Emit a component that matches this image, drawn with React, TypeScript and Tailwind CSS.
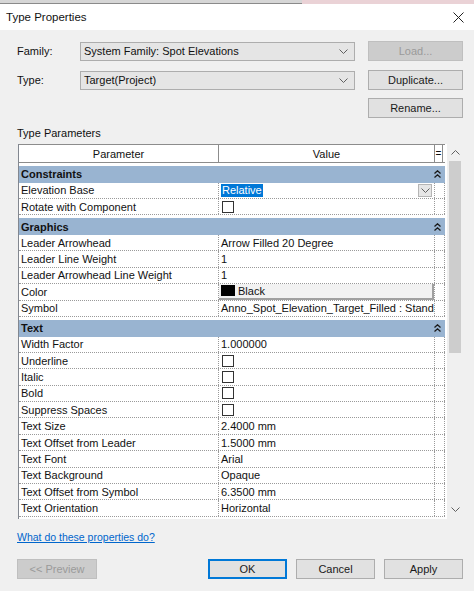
import React from 'react'

type Row =
  | { kind: 'group'; label: string }
  | { kind: 'row'; label: string; value: string | { type: 'check' | 'relative' | 'color' } }

const rows: Row[] = [
  { kind: 'group', label: 'Constraints' },
  { kind: 'row', label: 'Elevation Base', value: { type: 'relative' } },
  { kind: 'row', label: 'Rotate with Component', value: { type: 'check' } },
  { kind: 'group', label: 'Graphics' },
  { kind: 'row', label: 'Leader Arrowhead', value: 'Arrow Filled 20 Degree' },
  { kind: 'row', label: 'Leader Line Weight', value: '1' },
  { kind: 'row', label: 'Leader Arrowhead Line Weight', value: '1' },
  { kind: 'row', label: 'Color', value: { type: 'color' } },
  { kind: 'row', label: 'Symbol', value: 'Anno_Spot_Elevation_Target_Filled : Standard' },
  { kind: 'group', label: 'Text' },
  { kind: 'row', label: 'Width Factor', value: '1.000000' },
  { kind: 'row', label: 'Underline', value: { type: 'check' } },
  { kind: 'row', label: 'Italic', value: { type: 'check' } },
  { kind: 'row', label: 'Bold', value: { type: 'check' } },
  { kind: 'row', label: 'Suppress Spaces', value: { type: 'check' } },
  { kind: 'row', label: 'Text Size', value: '2.4000 mm' },
  { kind: 'row', label: 'Text Offset from Leader', value: '1.5000 mm' },
  { kind: 'row', label: 'Text Font', value: 'Arial' },
  { kind: 'row', label: 'Text Background', value: 'Opaque' },
  { kind: 'row', label: 'Text Offset from Symbol', value: '6.3500 mm' },
  { kind: 'row', label: 'Text Orientation', value: 'Horizontal' },
]

function Chevron({ className = '' }: { className?: string }) {
  return (
    <svg width="9" height="5" viewBox="0 0 9 5" className={className}>
      <path d="M0.5 0.5 L4.5 4.5 L8.5 0.5" fill="none" stroke="#606060" strokeWidth="1" />
    </svg>
  )
}

function DoubleUp() {
  return (
    <svg width="7" height="8" viewBox="0 0 7 8">
      <path d="M0.5 3.5 L3.5 0.8 L6.5 3.5 M0.5 7.5 L3.5 4.8 L6.5 7.5" fill="none" stroke="#1a1a1a" strokeWidth="1.3" />
    </svg>
  )
}

function Checkbox() {
  return <div className="w-[12px] h-[12px] border border-[#333333] bg-white" />
}

function Combo({ text }: { text: string }) {
  return (
    <div className="w-[275px] h-[19px] bg-[#e5e5e5] border border-[#adadad] flex items-center justify-between pl-[3px] pr-[6px]">
      <span>{text}</span>
      <Chevron />
    </div>
  )
}

function Btn({ label, disabled, primary, w = 'w-[95px]', h = 'h-[20px]' }: { label: string; disabled?: boolean; primary?: boolean; w?: string; h?: string }) {
  const cls = disabled
    ? 'bg-[#cccccc] border-[#bfbfbf] text-[#9a9a9a]'
    : primary
      ? 'bg-[#e1e1e1] border-[#0078d7] border-2 text-[#1a1a1a]'
      : 'bg-[#e1e1e1] border-[#adadad] text-[#1a1a1a]'
  return <div className={`${w} ${h} border flex items-center justify-center ${cls}`}>{label}</div>
}

function Value({ v }: { v: Extract<Row, { kind: 'row' }>['value'] }) {
  if (typeof v === 'string') {
    return <span className="pl-[2px] whitespace-nowrap leading-[14px]">{v}</span>
  }
  if (v.type === 'check') {
    return <div className="pl-[3px]"><Checkbox /></div>
  }
  if (v.type === 'relative') {
    return (
      <div className="flex items-center justify-between w-full pr-[2px]">
        <span className="ml-[2px] bg-[#0078d7] text-white px-[1px] h-[13px] flex items-center">Relative</span>
        <div className="w-[14px] h-[13px] bg-[#e6e6e6] border border-[#b5b5b5] flex items-center justify-center">
          <Chevron />
        </div>
      </div>
    )
  }
  return (
    <div className="w-full h-full bg-[#f2f2f2] border-r-2 border-b-2 border-[#a0a0a0] flex items-center gap-[3px] pl-[2px]">
      <div className="w-[14px] h-[11px] bg-black" />
      <span>Black</span>
    </div>
  )
}

export default function App() {
  return (
    <div className="w-[474px] h-[591px] overflow-hidden flex flex-col bg-[#f0f0f0] text-[11px] leading-[14px] text-[#111111] font-['Liberation_Sans','Arial',sans-serif]">
      <div className="h-[4px] flex">
        <div className="w-[302px] bg-[#d6d6d6] border-b border-[#8a8a8a]" />
        <div className="flex-1 bg-[#ead2d6]" />
      </div>
      <div className="h-[26px] bg-white flex items-center justify-between pl-[6px] pr-[10px]">
        <span className="text-[11.5px]">Type Properties</span>
        <svg width="11" height="11" viewBox="0 0 11 11">
          <path d="M0.5 0.5 L10.5 10.5 M10.5 0.5 L0.5 10.5" stroke="#222" strokeWidth="1" />
        </svg>
      </div>

      <div className="flex-1 flex flex-col pl-[17px] pr-[11px] pt-[11px]">
        <div className="flex items-center">
          <span className="w-[63px]">Family:</span>
          <Combo text="System Family: Spot Elevations" />
          <div className="ml-auto"><Btn label="Load..." disabled /></div>
        </div>
        <div className="flex items-center mt-[9px]">
          <span className="w-[63px]">Type:</span>
          <Combo text="Target(Project)" />
          <div className="ml-auto"><Btn label="Duplicate..." /></div>
        </div>
        <div className="flex justify-end mt-[8px]">
          <Btn label="Rename..." />
        </div>

        <div className="mt-[9px] h-[12px] flex items-center">Type Parameters</div>

        <div className="mt-[5px] ml-[1px] flex bg-white border-l border-[#828790] h-[375px]">
          <div className="w-[427px] flex flex-col">
            <div className="h-[19px] flex border-t border-b border-[#8c8c8c] bg-white">
              <div className="w-[200px] flex items-center justify-center border-r border-[#8c8c8c]">Parameter</div>
              <div className="w-[216px] flex items-center justify-center border-r border-[#8c8c8c]">Value</div>
              <div className="w-[8px] flex items-center justify-center border-r border-[#8c8c8c] text-[10px]">=</div>
            </div>
            {rows.map((r, i) =>
              r.kind === 'group' ? (
                <div key={i} className="h-[19.6px] pt-[3px] bg-white">
                  <div className="h-full bg-[#99b4d1] flex items-center justify-between pl-[2px] pr-[4px] font-bold">
                    <span>{r.label}</span>
                    <DoubleUp />
                  </div>
                </div>
              ) : (
                <div key={i} className="h-[16.4px] flex border-b border-dotted border-[#9a9a9a]">
                  <div className="w-[200px] flex items-center pl-[2px] border-r border-dotted border-[#9a9a9a] whitespace-nowrap">{r.label}</div>
                  <div className="w-[216px] flex items-center border-r border-dotted border-[#9a9a9a] overflow-hidden">
                    <Value v={r.value} />
                  </div>
                  <div className="w-[10px] border-r border-dotted border-[#9a9a9a]" />
                </div>
              )
            )}
          </div>
          <div className="w-[2px]" />
          <div className="w-[16px] bg-[#f0f0f0] flex flex-col items-center">
            <div className="h-[17px] flex items-center justify-center">
              <Chevron className="rotate-180" />
            </div>
            <div className="w-[12px] h-[192px] bg-[#cdcdcd]" />
            <div className="flex-1" />
            <div className="h-[17px] flex items-center justify-center mb-[1px]">
              <Chevron />
            </div>
          </div>
        </div>

        <div className="mt-[11px] text-[10.5px] text-[#0066cc] underline">What do these properties do?</div>

        <div className="mt-[15px] flex items-center">
          <Btn label="<< Preview" disabled w="w-[80px]" />
          <div className="ml-auto flex gap-[9px]">
            <Btn label="OK" primary w="w-[79px]" />
            <Btn label="Cancel" w="w-[79px]" />
            <Btn label="Apply" w="w-[79px]" />
          </div>
        </div>
      </div>
    </div>
  )
}
